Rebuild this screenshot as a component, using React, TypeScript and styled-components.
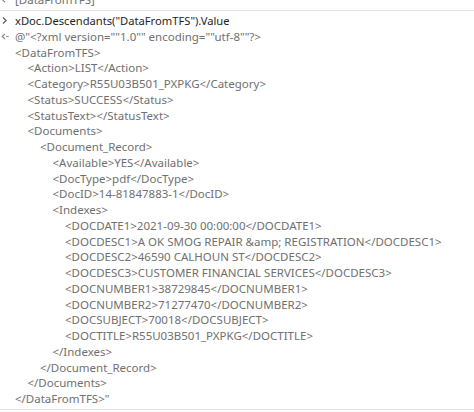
import React from "react";
import styled, { createGlobalStyle } from "styled-components";

const GlobalStyle = createGlobalStyle`
  html, body {
    margin: 0;
    padding: 0;
    background: #ffffff;
  }
  body {
    font-family: "Noto Sans", "Open Sans", sans-serif;
  }
`;

const Console = styled.div`
  width: 474px;
  height: 412px;
  overflow: hidden;
  background: #ffffff;
`;

// the panel is scrolled: the previous result is only half visible
const Log = styled.div`
  margin-top: -10px;
`;

const Entry = styled.div`
  padding: 2px 0 2px;
  border-bottom: 1px solid #e4e4e4;
`;

const Row = styled.div`
  display: flex;
  align-items: center;
  height: 15.75px;
  white-space: pre;
`;

const Gutter = styled.span`
  width: 15px;
  flex: none;
  display: flex;
  align-items: center;
  padding-left: 1px;
  box-sizing: border-box;
`;

const Text = styled.span<{ $level?: number; $tone?: "input" | "output" }>`
  padding-left: ${(p) => (p.$level ?? 0) * 12.5}px;
  color: ${(p) => (p.$tone === "input" ? "#1e1e1e" : "#707070")};
  font-size: ${(p) => (p.$tone === "input" ? "11.2px" : "11.5px")};
`;

const ChevronIn = () => (
  <svg width="8" height="9" viewBox="0 0 8 9">
    <path d="M2 1.5 L5.2 4.5 L2 7.5" fill="none" stroke="#555" strokeWidth="1.1" />
  </svg>
);

const ChevronOut = () => (
  <svg width="9" height="9" viewBox="0 0 9 9">
    <path d="M4 1.8 L1.2 4.5 L4 7.2" fill="none" stroke="#808080" strokeWidth="1.1" />
    <path d="M5.3 4.5 H7.6" stroke="#808080" strokeWidth="1.1" />
  </svg>
);

type XmlLine = [number, string];

const xml: XmlLine[] = [
  [0, "<DataFromTFS>"],
  [1, "<Action>LIST</Action>"],
  [1, "<Category>R55U03B501_PXPKG</Category>"],
  [1, "<Status>SUCCESS</Status>"],
  [1, "<StatusText></StatusText>"],
  [1, "<Documents>"],
  [2, "<Document_Record>"],
  [3, "<Available>YES</Available>"],
  [3, "<DocType>pdf</DocType>"],
  [3, "<DocID>14-81847883-1</DocID>"],
  [3, "<Indexes>"],
  [4, "<DOCDATE1>2021-09-30 00:00:00</DOCDATE1>"],
  [4, "<DOCDESC1>A OK SMOG REPAIR &amp; REGISTRATION</DOCDESC1>"],
  [4, "<DOCDESC2>46590 CALHOUN ST</DOCDESC2>"],
  [4, "<DOCDESC3>CUSTOMER FINANCIAL SERVICES</DOCDESC3>"],
  [4, "<DOCNUMBER1>38729845</DOCNUMBER1>"],
  [4, "<DOCNUMBER2>71277470</DOCNUMBER2>"],
  [4, "<DOCSUBJECT>70018</DOCSUBJECT>"],
  [4, "<DOCTITLE>R55U03B501_PXPKG</DOCTITLE>"],
  [3, "</Indexes>"],
  [2, "</Document_Record>"],
  [1, "</Documents>"],
  [0, "</DataFromTFS>\""],
];

export default function App() {
  return (
    <Console>
      <GlobalStyle />
      <Log>
        <Entry>
          <Row>
            <Gutter>
              <ChevronOut />
            </Gutter>
            <Text>[DataFromTFS]</Text>
          </Row>
        </Entry>
        <Entry>
          <Row>
            <Gutter>
              <ChevronIn />
            </Gutter>
            <Text $tone="input">xDoc.Descendants("DataFromTFS").Value</Text>
          </Row>
          <Row>
            <Gutter>
              <ChevronOut />
            </Gutter>
            <Text>@"&lt;?xml version=""1.0"" encoding=""utf-8""?&gt;</Text>
          </Row>
          {xml.map(([level, line], i) => (
            <Row key={i}>
              <Gutter />
              <Text $level={level}>{line}</Text>
            </Row>
          ))}
        </Entry>
      </Log>
    </Console>
  );
}
